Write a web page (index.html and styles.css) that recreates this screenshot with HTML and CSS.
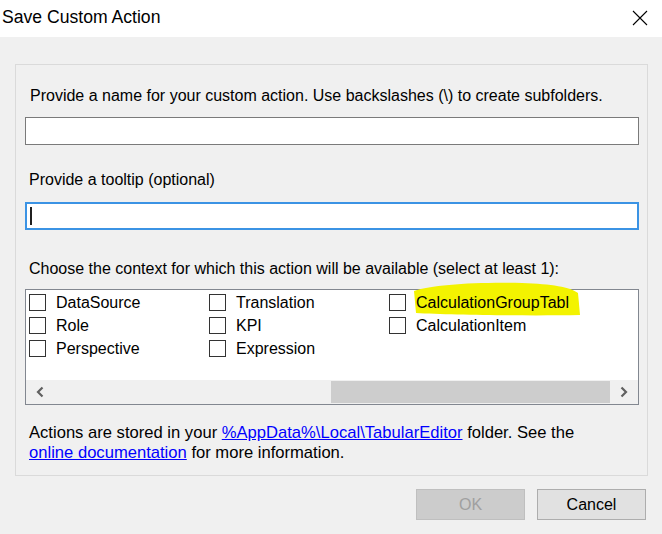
FILE: index.html
```html
<!DOCTYPE html>
<html>
<head>
<meta charset="utf-8">
<title>Save Custom Action</title>
<link rel="stylesheet" href="styles.css">
</head>
<body>
<div class="window">
  <div class="titlebar">
    <span class="title">Save Custom Action</span>
    <svg class="close" width="16" height="16" viewBox="0 0 16 16"><path d="M1 1 L15 15 M15 1 L1 15" stroke="#000" stroke-width="1.1" fill="none"/></svg>
  </div>
  <div class="panel">
    <div class="label first">Provide a name for your custom action. Use backslashes (\) to create subfolders.</div>
    <div class="textbox"></div>
    <div class="label second">Provide a tooltip (optional)</div>
    <div class="textbox focused"><span class="caret"></span></div>
    <div class="label third">Choose the context for which this action will be available (select at least 1):</div>
    <div class="listbox">
      <div class="items">
        <div class="col">
          <label class="item"><span class="box"></span>DataSource</label>
          <label class="item"><span class="box"></span>Role</label>
          <label class="item"><span class="box"></span>Perspective</label>
        </div>
        <div class="col">
          <label class="item"><span class="box"></span>Translation</label>
          <label class="item"><span class="box"></span>KPI</label>
          <label class="item"><span class="box"></span>Expression</label>
        </div>
        <div class="col">
          <label class="item"><span class="box"></span><span class="marked"><svg class="marker" width="170" height="38" viewBox="0 0 170 38"><path d="M2 10 C 20 4, 60 1, 110 2 C 140 3, 158 6, 166 12 L 168 34 C 120 35, 40 34, 4 32 Z" fill="#f3f300"/></svg><span class="marktext">CalculationGroupTabl</span></span></label>
          <label class="item"><span class="box"></span>CalculationItem</label>
        </div>
      </div>
      <div class="hscroll">
        <div class="arrow left"><svg width="10" height="12" viewBox="0 0 10 12"><path d="M7.5 1.5 L3 6 L7.5 10.5" stroke="#606060" stroke-width="2.2" fill="none"/></svg></div>
        <div class="track"><div class="thumb"></div></div>
        <div class="arrow right"><svg width="10" height="12" viewBox="0 0 10 12"><path d="M2.5 1.5 L7 6 L2.5 10.5" stroke="#606060" stroke-width="2.2" fill="none"/></svg></div>
      </div>
    </div>
    <div class="footer">Actions are stored in your <a href="#">%AppData%\Local\TabularEditor</a> folder. See the<br><a href="#">online documentation</a> for more information.</div>
  </div>
  <div class="buttons">
    <div class="btn disabled">OK</div>
    <div class="btn">Cancel</div>
  </div>
</div>
</body>
</html>
```
FILE: styles.css
```css
html, body {
  margin: 0;
  padding: 0;
}
body {
  background: #f0f0f0;
  font-family: "Liberation Sans", Arial, sans-serif;
  font-size: 16px;
  color: #000;
  width: 662px;
  height: 534px;
  overflow: hidden;
}
.titlebar {
  height: 37px;
  background: #fff;
  display: flex;
  align-items: center;
  justify-content: space-between;
}
.title {
  font-size: 17.6px;
  padding-left: 2px;
  padding-bottom: 2px;
}
.close {
  margin-right: 14px;
  margin-bottom: 2px;
}
.panel {
  margin: 27px 0 0 15px;
  width: 622px;
  height: 410px;
  border: 1px solid #dadada;
  padding: 0 0 0 9px;
  box-sizing: content-box;
}
.label {
  line-height: 20px;
  padding-left: 5px;
}
.label.first { margin-top: 21px; }
.label.second { margin-top: 25px; padding-left: 4px; }
.label.third { margin-top: 29px; padding-left: 4px; }
.textbox {
  margin-top: 11px;
  width: 614px;
  height: 28px;
  box-sizing: border-box;
  background: #fff;
  border: 1px solid #7a7a7a;
}
.textbox.focused {
  margin-top: 12px;
  border: 2px solid #3b93e4;
  display: flex;
  align-items: center;
  padding-left: 3px;
}
.caret {
  width: 2px;
  height: 18px;
  background: #202020;
}
.listbox {
  margin-top: 10px;
  width: 614px;
  height: 116px;
  box-sizing: border-box;
  border: 1px solid #828790;
  background: #fff;
  display: flex;
  flex-direction: column;
}
.items {
  flex: 1;
  display: flex;
  padding: 1px 0 0 3px;
}
.col {
  width: 180px;
  display: flex;
  flex-direction: column;
}
.item {
  display: flex;
  align-items: center;
  height: 23px;
  line-height: 23px;
  white-space: nowrap;
}
.box {
  width: 15px;
  height: 15px;
  border: 1px solid #333;
  background: #fff;
  margin-right: 10px;
  flex: none;
}
.marked {
  position: relative;
}
.marker {
  position: absolute;
  left: -4px;
  top: -10px;
}
.marktext {
  position: relative;
}
.hscroll {
  height: 24px;
  display: flex;
  background: #f0f0f0;
}
.arrow {
  display: flex;
  align-items: center;
  justify-content: center;
}
.arrow.left { width: 26px; padding-left: 2px; box-sizing: border-box; }
.arrow.right { width: 28px; }
.track {
  flex: 1;
  display: flex;
  justify-content: flex-end;
}
.thumb {
  width: 279px;
  background: #cdcdcd;
  margin: 1px 0;
}
.footer {
  margin-top: 18px;
  padding-left: 4px;
  line-height: 20px;
  font-size: 16.6px;
}
.footer a {
  color: #0000ff;
  text-decoration: underline;
}
.buttons {
  display: flex;
  justify-content: flex-end;
  gap: 12px;
  margin: 13px 16px 0 0;
}
.btn {
  width: 109px;
  height: 31px;
  box-sizing: border-box;
  border: 1px solid #adadad;
  background: #e1e1e1;
  display: flex;
  align-items: center;
  justify-content: center;
}
.btn.disabled {
  background: #cccccc;
  border-color: #bfbfbf;
  color: #a0a0a0;
}
```
